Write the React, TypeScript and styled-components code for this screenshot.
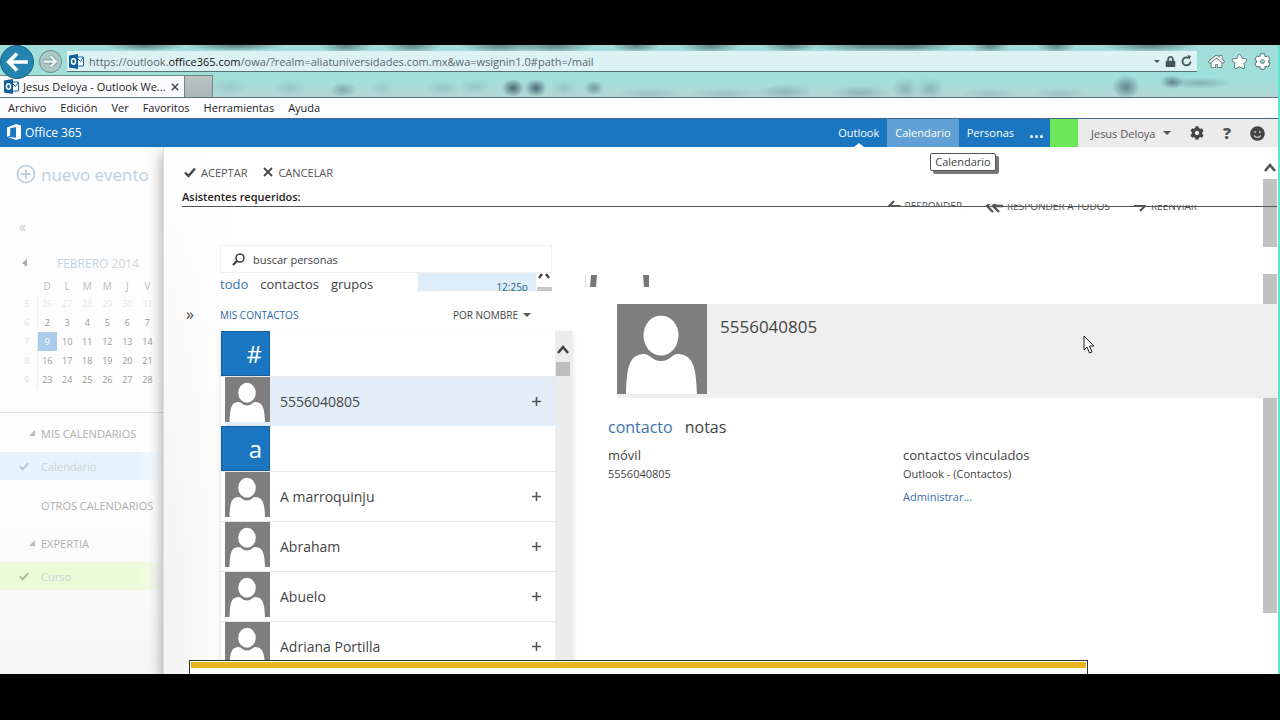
import React from "react";
import styled, { createGlobalStyle } from "styled-components";
import { FaLock, FaCog, FaHome, FaStar, FaSmile } from "react-icons/fa";

const GlobalStyle = createGlobalStyle`
  *, *::before, *::after { box-sizing: border-box; }
  body { margin: 0; background: #000; font-family: "Open Sans", "Noto Sans", sans-serif; font-size: 11px; color: #444; }
  button, input { font: inherit; color: inherit; }
  button { border: 0; padding: 0; background: none; cursor: pointer; }
  a { text-decoration: none; color: inherit; }
  svg { display: block; flex: none; }
  ul { list-style: none; margin: 0; padding: 0; }
  p, h1, h2, h3 { margin: 0; font-weight: 400; }
`;

const Screen = styled.div`
  height: 100vh;
  padding: 45px 0 46px;
  background: #000;
  display: flex;
`;

const Browser = styled.div`
  flex: 1;
  min-width: 0;
  display: flex;
  flex-direction: column;
  overflow: hidden;
  background: #fff;
  border-right: 2px solid #5fe6d0;
`;

/* ---------- window frame ---------- */

const spot = (x: number, y: number, w: number, h: number, color: string) =>
  `radial-gradient(ellipse ${w}px ${h}px at ${x}px ${y}px, ${color}, transparent)`;

const glassSpots = [
  [346, 1, 26, 7], [412, 1, 28, 7], [500, 1, 40, 7], [555, 1, 40, 7], [636, 1, 24, 6],
  [710, 1, 30, 7], [790, 1, 28, 6], [870, 1, 60, 6], [915, 1, 40, 6], [990, 1, 20, 7],
  [1056, 1, 20, 7], [1150, 1, 48, 6], [145, 1, 40, 5], [235, 1, 50, 5],
].map(([x, y, w, h]) => spot(x, y, w, h, "rgba(60,85,88,.65)")).join(",");

const tabSpots = [
  [343, 45, 14, 8, 0.35], [382, 43, 12, 8, 0.12], [443, 43, 16, 8, 0.15], [475, 42, 16, 8, 0.15],
  [513, 43, 11, 9, 0.8], [536, 43, 11, 9, 0.8], [564, 43, 14, 9, 0.15], [594, 43, 10, 8, 0.45],
  [650, 49, 36, 6, 0.15], [725, 49, 40, 6, 0.15], [785, 47, 28, 8, 0.25], [860, 48, 30, 8, 0.25],
  [905, 44, 14, 12, 0.25], [930, 44, 14, 12, 0.25], [990, 49, 30, 6, 0.15], [1060, 49, 30, 6, 0.15],
  [1126, 42, 14, 12, 0.6], [1172, 37, 12, 7, 0.6], [1200, 38, 32, 6, 0.3], [230, 42, 20, 9, 0.12], [290, 43, 18, 9, 0.15],
].map(([x, y, w, h, a]) => spot(x, y, w, h, `rgba(50,75,90,${a})`)).join(",");

const Frame = styled.div`
  flex: none;
  background: ${glassSpots}, ${tabSpots}, linear-gradient(#a2dcd9, #a0e0da 60%, #b2d8d6);
  border-bottom: 1px solid #5d7573;
`;

const AddressRow = styled.div`
  height: 30px;
  display: flex;
  align-items: center;
  gap: 5px;
`;

const BackButton = styled.button`
  position: relative;
  width: 34px;
  height: 34px;
  margin: 3px 0 -1px;
  border-radius: 50%;
  border: 1px solid #1c6484;
  background: #2384b0;
  display: grid;
  place-items: center;
`;

const ForwardButton = styled.button`
  width: 23px;
  height: 23px;
  margin-top: 2px;
  border-radius: 50%;
  border: 1px solid #6d8989;
  background: #adc8c6;
  display: grid;
  place-items: center;
  svg { paint-order: stroke; filter: drop-shadow(0 0 1px #4f6b6b); }
`;

const AddressBox = styled.label`
  flex: 1;
  min-width: 0;
  height: 21px;
  margin-top: 3px;
  padding: 0 5px 0 2px;
  display: flex;
  align-items: center;
  gap: 5px;
  background: #dcf2f4;
  border-bottom: 1px solid #567271;
`;

const UrlField = styled.div`
  flex: 1;
  min-width: 0;
  line-height: 19px;
  white-space: nowrap;
  color: #58686b;
  b { font-weight: 400; color: #111; }
`;

const ChromeIcons = styled.div`
  display: flex;
  gap: 8px;
  padding: 2px 8px 0 7px;
  color: #fff;
  button svg { stroke: #52706f; stroke-width: 60px; paint-order: stroke; overflow: visible; }
`;

const TabRow = styled.div`
  height: 22px;
  display: flex;
`;

const Tab = styled.div`
  width: 185px;
  padding: 0 5px 0 4px;
  border: 1px solid #6f8886;
  border-width: 1px 1px 0 0;
  background: #fcfcfe;
  display: flex;
  align-items: center;
  gap: 4px;
  color: #222;
  white-space: nowrap;
  span { flex: 1; }
`;

const NewTab = styled.button`
  width: 28px;
  border: 1px solid #6f8886;
  border-left: 0;
  border-bottom: 0;
  background: linear-gradient(#bcc3c3, #a9b5b4);
`;

const MenuBar = styled.nav`
  flex: none;
  height: 21px;
  padding: 0 8px 1px;
  display: flex;
  align-items: center;
  gap: 14px;
  background: #fdfcfe;
  border-bottom: 1px solid #45688a;
  color: #222;
`;

/* ---------- Office bar ---------- */

const OfficeBar = styled.header`
  flex: none;
  height: 28px;
  display: flex;
  background: #1b76c1;
  color: #fff;
`;

const Brand = styled.a`
  flex: 1;
  padding: 0 0 2px 7px;
  display: flex;
  align-items: center;
  gap: 4px;
  font-size: 12px;
`;

const NavLink = styled.a<{ $hover?: boolean; $current?: boolean }>`
  position: relative;
  padding: 0 8px;
  line-height: 28px;
  font-size: 11px;
  font-weight: 500;
  background: ${(p) => (p.$hover ? "#61a0d4" : "none")};
  &::after {
    content: "";
    display: ${(p) => (p.$current ? "block" : "none")};
    position: absolute;
    bottom: 0;
    left: 50%;
    margin-left: -5px;
    border: 5px solid transparent;
    border-top: 0;
    border-bottom: 4px solid #fff;
  }
`;

const Tooltip = styled.span`
  position: absolute;
  z-index: 5;
  top: 34px;
  left: 43px;
  padding: 0 4px;
  line-height: 16px;
  border: 1px solid #555;
  border-radius: 2px;
  background: #fff;
  color: #444;
  font-weight: 400;
  box-shadow: 3px 3px 0 #777;
`;

const MoreButton = styled.button`
  width: 28px;
  display: flex;
  align-items: center;
  justify-content: center;
  gap: 2px;
  padding-top: 6px;
  i { width: 3px; height: 3px; border-radius: 50%; background: #fff; }
`;

const Presence = styled.div`
  width: 28px;
  background: #6de65b;
`;

const UserArea = styled.div`
  width: 200px;
  padding: 0 13px;
  display: flex;
  align-items: center;
  justify-content: space-between;
  background: #ebebeb;
  color: #555;
`;

const UserButton = styled.button`
  display: flex;
  align-items: center;
  gap: 8px;
`;

const HelpButton = styled.button`
  font-size: 16px;
  font-weight: 800;
`;

/* ---------- calendar side column ---------- */

const Workspace = styled.div`
  flex: 1;
  min-height: 0;
  display: flex;
  overflow: hidden;
`;

const Side = styled.aside`
  width: 163px;
  flex: none;
  background: linear-gradient(#fdfdfd 70%, #f6f6f6);
  color: #bbb;
`;

const NewEvent = styled.button`
  display: flex;
  align-items: center;
  gap: 5px;
  height: 26px;
  margin: 14px 0 0 16px;
  font-size: 17px;
  color: #bccfdd;
`;

const Collapse = styled.button`
  display: block;
  margin: 28px 0 0 19px;
  height: 22px;
  font-size: 14px;
  color: #ccc;
`;

const MonthRow = styled.div`
  display: flex;
  align-items: center;
  height: 20px;
  margin-top: 16px;
  padding-left: 22px;
  gap: 30px;
  font-size: 12px;
  color: #c0d3e0;
  span { color: #cfd6da; }
`;

const MonthGrid = styled.table`
  margin: 5px 0 0 17px;
  border-collapse: collapse;
  table-layout: fixed;
  width: 141px;
  font-size: 9px;
  text-align: center;
  th, td { padding: 0; font-weight: 400; height: 19px; }
  thead th { height: 16px; font-size: 10px; }
`;

const Day = styled.td<{ $dim?: boolean; $selected?: boolean }>`
  color: ${(p) => (p.$selected ? "#fff" : p.$dim ? "#e6e6e6" : "#999")};
  background: ${(p) => (p.$selected ? "#aaccea" : "none")};
`;

const Week = styled.th`
  color: #e2e2e2;
  border-right: 1px solid #f0f0f0;
`;

const Groups = styled.div`
  margin-top: 23px;
  border-top: 1px solid #ddd;
  padding-top: 7px;
`;

const GroupTitle = styled.h3`
  display: flex;
  align-items: center;
  height: 28px;
  padding: 0 0 2px 29px;
  gap: 5px;
  font-size: 11px;
  color: #b0b0b0;
  white-space: nowrap;
  svg { fill: #bbb; }
`;

const CalendarItem = styled.div<{ $tone: string }>`
  height: 28px;
  margin: 4px 0 12px;
  padding-left: 19px;
  display: flex;
  align-items: center;
  gap: 12px;
  background: linear-gradient(90deg, ${(p) => p.$tone} 85%, transparent);
  color: #ccd2d6;
`;

const GroupGap = styled.div`
  height: 10px;
`;

/* ---------- people picker ---------- */

const Dialog = styled.main`
  position: relative;
  flex: 1;
  min-width: 0;
  display: flex;
  background: linear-gradient(#fefefe, rgba(254, 254, 254, 0) 80%), linear-gradient(90deg, #f3f3f3, #fefefe 64px);
  border-left: 1px solid #ddd;
  box-shadow: -2px 6px 12px rgba(0, 0, 0, 0.3);
`;

const DialogBody = styled.div`
  flex: 1;
  min-width: 0;
  display: flex;
  flex-direction: column;
`;

const Commands = styled.div`
  display: flex;
  align-items: center;
  gap: 16px;
  height: 18px;
  margin: 16px 0 7px 20px;
`;

const Command = styled.button`
  display: flex;
  align-items: center;
  gap: 5px;
  color: #555;
`;

const FieldRow = styled.div`
  position: relative;
  height: 19px;
  margin-left: 18px;
  line-height: 18px;
  font-weight: 600;
  border-bottom: 1px solid #555;
  color: #222;
`;

/* remains of the message toolbar that shows behind the rule */
const BehindBar = styled.div`
  position: absolute;
  z-index: -1;
  top: 11px;
  right: 66px;
  height: 14px;
  display: flex;
  gap: 23px;
  font-weight: 400;
  font-size: 10px;
  line-height: 14px;
  color: #555;
`;

const BehindCommand = styled.span<{ $from: number; $size: number }>`
  position: relative;
  display: flex;
  align-items: center;
  gap: 4px;
  &::after {
    content: "";
    position: absolute;
    top: ${(p) => p.$from}px;
    height: ${(p) => p.$size}px;
    left: 0;
    right: 0;
    background: #fefefe;
  }
`;

const FieldLayer = styled.div`
  position: relative;
  z-index: 0;
`;

const Columns = styled.div`
  flex: 1;
  min-height: 0;
  display: flex;
`;

const Expander = styled.button`
  width: 56px;
  height: 22px;
  flex: none;
  margin-top: 96px;
  padding-left: 22px;
  text-align: left;
  font-size: 16px;
  line-height: 16px;
`;

const Picker = styled.section`
  width: 352px;
  flex: none;
  padding-top: 38px;
  display: flex;
  flex-direction: column;
`;

const SearchBox = styled.label`
  width: 332px;
  height: 28px;
  padding-left: 11px;
  display: flex;
  align-items: center;
  gap: 8px;
  border: 1px solid #f0f0f0;
  background: #fff;
  input {
    flex: 1; border: 0; outline: 0; padding: 0; background: none; color: #444;
    &::placeholder { color: #444; opacity: 1; }
  }
`;

const Filters = styled.div`
  display: flex;
  gap: 12px;
  height: 24px;
  width: 332px;
  font-size: 13px;
`;

const Filter = styled.button<{ $active?: boolean }>`
  padding-bottom: 2px;
  color: ${(p) => (p.$active ? "#3a75ae" : "#444")};
`;

const MessagePeek = styled.div`
  margin-left: auto;
  width: 134px;
  height: 18px;
  overflow: hidden;
  display: flex;
  font-size: 10px;
  line-height: 14px;
  color: #2b6488;
`;

const PeekTime = styled.span`
  flex: 1;
  padding: 7px 8px 0 0;
  text-align: right;
  background: #deecf8;
`;

const PeekScroll = styled.span`
  width: 16px;
  padding-left: 1px;
  display: flex;
  flex-direction: column;
  justify-content: space-between;
  color: #555;
  &::after { content: ""; height: 4px; background: #c8c8c8; }
`;

const ListHead = styled.div`
  display: flex;
  align-items: center;
  justify-content: space-between;
  width: 311px;
  height: 20px;
  margin: 8px 0 6px;
  font-size: 10px;
  h2 { font-size: 10px; color: #2f67a5; }
`;

const SortButton = styled.button`
  display: flex;
  align-items: center;
  gap: 5px;
`;

const ListFrame = styled.div`
  flex: 1;
  min-height: 0;
  display: flex;
  margin-left: 1px;
  background: #fff;
  box-shadow: 0 3px 5px rgba(0, 0, 0, 0.14);
  overflow: hidden;
`;

const ContactList = styled.ul`
  flex: 1;
  height: 0;
`;

const LetterRow = styled.li`
  height: 45px;
`;

const LetterTile = styled.div`
  width: 49px;
  height: 45px;
  padding: 0 7px;
  background: #1b76c1;
  border: 1px solid #155f9c;
  color: #fff;
  font-size: 24px;
  line-height: 44px;
  text-align: right;
`;

const ContactRow = styled.li<{ $selected?: boolean }>`
  height: 50px;
  padding: 0 13px 0 4px;
  display: flex;
  align-items: center;
  gap: 10px;
  border-top: 1px solid #e8e8e8;
  background: ${(p) => (p.$selected ? "linear-gradient(90deg, #fff 4px, #e3edf8 4px)" : "#fff")};
  font-size: 14px;
  > svg { align-self: flex-start; }
  span { flex: 1; }
`;

const ListScroll = styled.div`
  width: 17px;
  padding: 13px 2px 0 1px;
  background: #ececec;
  color: #444;
  &::after { content: ""; display: block; height: 14px; margin-top: 7px; background: #bdbdbd; }
`;

/* ---------- contact card ---------- */

const Card = styled.section`
  flex: 1;
  min-width: 0;
  padding: 68px 0 0 12px;
`;

const AvatarPeek = styled.div`
  height: 12px;
  margin-bottom: 17px;
`;

const Banner = styled.div`
  height: 94px;
  margin-left: 24px;
  padding-left: 9px;
  display: flex;
  gap: 13px;
  background: linear-gradient(90deg, #fefefe 9px, #efefef 9px);
  h1 { padding-top: 10px; font-size: 17px; line-height: 26px; }
`;

const CardTabs = styled.div`
  display: flex;
  gap: 12px;
  height: 26px;
  margin: 17px 0 2px 24px;
  font-size: 16px;
`;

const Facts = styled.div`
  display: grid;
  grid-template-columns: 295px 1fr;
  margin-left: 24px;
  h3 { font-size: 13px; line-height: 24px; }
  p { line-height: 14px; }
  a { display: block; margin-top: 9px; line-height: 14px; color: #3a6ea8; }
`;

const PageScroll = styled.div`
  width: 15px;
  flex: none;
  padding: 15px 1px 0 0;
  color: #555;
`;

const ScrollPart = styled.div<{ $size: number; $tone: string }>`
  height: ${(p) => p.$size}px;
  background: ${(p) => p.$tone};
`;

const Notice = styled.div`
  position: absolute;
  z-index: 3;
  left: 25px;
  right: 190px;
  bottom: 0;
  height: 14px;
  padding: 1px;
  border: 1px solid #333;
  border-bottom: 0;
  background: #fff;
  &::before { content: ""; display: block; height: 6px; background: #e8b420; }
`;

const Pointer = styled.svg`
  position: absolute;
  left: 919px;
  top: 188px;
`;

/* ---------- drawings ---------- */

const OutlookLogo = () => (
  <svg width="15" height="15" viewBox="0 0 15 15" aria-hidden="true">
    <path d="M8 3h6.5v9H8z" fill="#fff" stroke="#1668a8" />
    <path d="M8 4l3.5 3.5L14.5 3" fill="none" stroke="#1668a8" />
    <path d="M0 1.5L9 0v15L0 13.5z" fill="#0f5f9e" />
    <ellipse cx="4.5" cy="7.5" rx="2" ry="2.7" fill="none" stroke="#fff" strokeWidth="1.5" />
  </svg>
);

const OfficeLogo = () => (
  <svg width="14" height="16" viewBox="0 0 14 16" aria-hidden="true">
    <path d="M0 3.5L9 0l5 1.5v13L9 16 0 12.7l9 1V3L3.2 4.3v7.2L0 12.7z" fill="#fff" />
  </svg>
);

const Arrow = ({ size, flip, color }: { size: number; flip?: boolean; color: string }) => (
  <svg width={size} height={size} viewBox="0 0 20 20" fill="none" stroke={color} strokeWidth="3" aria-hidden="true">
    <path d={flip ? "M1 10h16M10 3l7 7-7 7" : "M19 10H3M10 3l-7 7 7 7"} />
  </svg>
);

const Check = ({ color = "#444", size = 12 }: { color?: string; size?: number }) => (
  <svg width={size} height={size} viewBox="0 0 12 12" fill="none" stroke={color} strokeWidth="2.4" aria-hidden="true">
    <path d="M1 6.5L4.5 10 11 2.5" />
  </svg>
);

const Cross = ({ size = 10, width = 1.8 }: { size?: number; width?: number }) => (
  <svg width={size} height={size} viewBox="0 0 10 10" fill="none" stroke="#444" strokeWidth={width} aria-hidden="true">
    <path d="M1 1l8 8M9 1L1 9" />
  </svg>
);

const Caret = () => (
  <svg width="8" height="4" viewBox="0 0 8 4" fill="#555" aria-hidden="true"><path d="M0 0h8L4 4z" /></svg>
);

const Chevron = () => (
  <svg width="14" height="11" viewBox="0 0 14 11" fill="none" stroke="currentColor" strokeWidth="2.6" aria-hidden="true">
    <path d="M2 9l5-6 5 6" />
  </svg>
);

const Plus = () => (
  <svg width="11" height="11" viewBox="0 0 11 11" stroke="#555" strokeWidth="1.6" aria-hidden="true">
    <path d="M5.5 1v9M1 5.5h9" />
  </svg>
);

const Corner = () => (
  <svg width="7" height="6" viewBox="0 0 7 6" aria-hidden="true"><path d="M6 0v6H0z" /></svg>
);

const Avatar = ({ size }: { size: number }) => (
  <svg width={size} height={size} viewBox="0 0 90 90" aria-hidden="true">
    <path d="M0 0h90v90H0z" fill="#7e7e7e" />
    <path d="M9 90C10 62 12 51 27 50c6 0 8 7 17 7s11-7 17-7c15 1 18 12 19 40z" fill="#fff" />
    <ellipse cx="44" cy="31.5" rx="17.5" ry="20" fill="#fff" />
  </svg>
);

const days = [
  ["5", "26", "27", "28", "29", "30", "31"],
  ["6", "2", "3", "4", "5", "6", "7"],
  ["7", "9", "10", "11", "12", "13", "14"],
  ["8", "16", "17", "18", "19", "20", "21"],
  ["9", "23", "24", "25", "26", "27", "28"],
];

const Contact = ({ name, selected }: { name: string; selected?: boolean }) => (
  <ContactRow $selected={selected}>
    <Avatar size={45} />
    <span>{name}</span>
    <button aria-label={`Agregar ${name}`}><Plus /></button>
  </ContactRow>
);

export default function App() {
  return (
    <Screen>
      <GlobalStyle />
      <Browser>
        <Frame>
          <AddressRow>
            <BackButton aria-label="Atrás"><Arrow size={24} color="#fff" /></BackButton>
            <ForwardButton aria-label="Adelante"><Arrow size={15} flip color="#eef6f6" /></ForwardButton>
            <AddressBox as="div">
              <OutlookLogo />
              <UrlField>
                https://outlook.<b>office365.com</b>/owa/?realm=aliatuniversidades.com.mx&amp;wa=wsignin1.0#path=/mail
              </UrlField>
              <svg width="6" height="3" viewBox="0 0 6 3" fill="#455"><path d="M0 0h6L3 3z" /></svg>
              <FaLock size={11} color="#455" />
              <svg width="11" height="12" viewBox="0 0 11 12" fill="none" stroke="#455" strokeWidth="1.8">
                <path d="M9.5 6.5A4 4 0 1 1 7.5 3" /><path d="M6.5 0l3.5 1-2 4z" fill="#455" stroke="none" />
              </svg>
            </AddressBox>
            <ChromeIcons>
              <button aria-label="Inicio"><FaHome size={15} /></button>
              <button aria-label="Favoritos"><FaStar size={15} /></button>
              <button aria-label="Opciones"><FaCog size={15} /></button>
            </ChromeIcons>
          </AddressRow>
          <TabRow>
            <Tab>
              <OutlookLogo />
              <span>Jesus Deloya - Outlook We...</span>
              <button aria-label="Cerrar"><Cross size={8} /></button>
            </Tab>
            <NewTab aria-label="Nueva pestaña" />
          </TabRow>
        </Frame>
        <MenuBar>
          {["Archivo", "Edición", "Ver", "Favoritos", "Herramientas", "Ayuda"].map((m) => (
            <button key={m}>{m}</button>
          ))}
        </MenuBar>

        <OfficeBar>
          <Brand href="#"><OfficeLogo />Office 365</Brand>
          <NavLink href="#" $current>Outlook</NavLink>
          <NavLink href="#" $hover>Calendario<Tooltip>Calendario</Tooltip></NavLink>
          <NavLink href="#">Personas</NavLink>
          <MoreButton aria-label="Más"><i /><i /><i /></MoreButton>
          <Presence />
          <UserArea>
            <UserButton>Jesus Deloya <Caret /></UserButton>
            <button aria-label="Configuración"><FaCog size={14} color="#444" /></button>
            <HelpButton>?</HelpButton>
            <button aria-label="Cuenta"><FaSmile size={15} color="#444" /></button>
          </UserArea>
        </OfficeBar>

        <Workspace>
          <Side>
            <NewEvent>
              <svg width="20" height="20" viewBox="0 0 20 20" fill="none" stroke="#bccfdd" strokeWidth="1.7">
                <circle cx="10" cy="10" r="8.5" /><path d="M10 5.5v9M5.5 10h9" strokeWidth="2" />
              </svg>
              nuevo evento
            </NewEvent>
            <Collapse>«</Collapse>
            <MonthRow>
              <svg width="5" height="8" viewBox="0 0 5 8" fill="#aaa"><path d="M5 0v8L0 4z" /></svg>
              <div>FEBRER<span>O 2014</span></div>
            </MonthRow>
            <MonthGrid>
              <thead>
                <tr><th />{["D", "L", "M", "M", "J", "V"].map((d, i) => <th key={i}>{d}</th>)}</tr>
              </thead>
              <tbody>
                {days.map(([week, ...row], r) => (
                  <tr key={week}>
                    <Week>{week}</Week>
                    {row.map((d) => <Day key={d} $dim={r === 0} $selected={r === 2 && d === "9"}>{d}</Day>)}
                  </tr>
                ))}
              </tbody>
            </MonthGrid>
            <Groups>
              <GroupTitle><Corner />MIS CALENDARIOS</GroupTitle>
              <CalendarItem $tone="#e6f3fc"><Check color="#bcc6cc" size={10} />Calendario</CalendarItem>
              <GroupTitle><svg width="7" height="6" />OTROS CALENDARIOS</GroupTitle>
              <GroupGap />
              <GroupTitle><Corner />EXPERTIA</GroupTitle>
              <CalendarItem $tone="#ebfbd8"><Check color="#a9b8a0" size={10} />Curso</CalendarItem>
            </Groups>
          </Side>

          <Dialog>
            <DialogBody>
              <Commands>
                <Command><Check />ACEPTAR</Command>
                <Command><Cross />CANCELAR</Command>
              </Commands>
              <FieldLayer>
                <FieldRow>
                  Asistentes requeridos:
                  <BehindBar>
                    <BehindCommand $from={8} $size={6}><Arrow size={14} color="#555" />RESPONDER</BehindCommand>
                    <BehindCommand $from={0} $size={5}>
                      <svg width="18" height="14" viewBox="0 0 18 14" fill="none" stroke="#555" strokeWidth="2.4">
                        <path d="M8 1L2 7l6 6M14 1L8 7l6 6M8 7h10" />
                      </svg>
                      RESPONDER A TODOS
                    </BehindCommand>
                    <BehindCommand $from={0} $size={6}><Arrow size={14} flip color="#555" />REENVIAR</BehindCommand>
                  </BehindBar>
                </FieldRow>
              </FieldLayer>
              <Columns>
                <Expander aria-label="Expandir">»</Expander>
                <Picker>
                  <SearchBox>
                    <svg width="13" height="13" viewBox="0 0 13 13" fill="none" stroke="#444">
                      <circle cx="8" cy="5" r="4" strokeWidth="1.6" /><path d="M5 8l-4 4" strokeWidth="2.4" />
                    </svg>
                    <input type="text" placeholder="buscar personas" aria-label="buscar personas" />
                  </SearchBox>
                  <Filters>
                    <Filter $active>todo</Filter>
                    <Filter>contactos</Filter>
                    <Filter>grupos</Filter>
                    <MessagePeek>
                      <PeekTime>12:25p</PeekTime>
                      <PeekScroll>
                        <svg width="14" height="6" viewBox="0 0 14 6" fill="none" stroke="#444" strokeWidth="2.4"><path d="M2 5l3-4M9 1l3 4" /></svg>
                      </PeekScroll>
                    </MessagePeek>
                  </Filters>
                  <ListHead>
                    <h2>MIS CONTACTOS</h2>
                    <SortButton>POR NOMBRE <Caret /></SortButton>
                  </ListHead>
                  <ListFrame>
                    <ContactList>
                      <LetterRow><LetterTile>#</LetterTile></LetterRow>
                      <Contact name="5556040805" selected />
                      <LetterRow><LetterTile>a</LetterTile></LetterRow>
                      <Contact name="A marroquinju" />
                      <Contact name="Abraham" />
                      <Contact name="Abuelo" />
                      <Contact name="Adriana Portilla" />
                    </ContactList>
                    <ListScroll><Chevron /></ListScroll>
                  </ListFrame>
                </Picker>
                <Card>
                  <AvatarPeek>
                    <svg width="68" height="12" viewBox="0 0 68 12">
                      <path d="M1.5 0v12H5" fill="none" stroke="#ddd" />
                      <path d="M7 0h6l-1 12H6zM59 0h6v12h-5z" fill="#777" />
                    </svg>
                  </AvatarPeek>
                  <Banner><Avatar size={90} /><h1>5556040805</h1></Banner>
                  <CardTabs>
                    <Filter $active>contacto</Filter>
                    <Filter>notas</Filter>
                  </CardTabs>
                  <Facts>
                    <div><h3>móvil</h3><p>5556040805</p></div>
                    <div>
                      <h3>contactos vinculados</h3>
                      <p>Outlook - (Contactos)</p>
                      <a href="#">Administrar...</a>
                    </div>
                  </Facts>
                </Card>
              </Columns>
            </DialogBody>
            <PageScroll>
              <Chevron />
              <ScrollPart $size={6} $tone="transparent" />
              <ScrollPart $size={27} $tone="#c1c1c1" />
              <ScrollPart $size={1} $tone="#555" />
              <ScrollPart $size={40} $tone="#c1c1c1" />
              <ScrollPart $size={27} $tone="transparent" />
              <ScrollPart $size={30} $tone="#c1c1c1" />
              <ScrollPart $size={94} $tone="#efefef" />
              <ScrollPart $size={215} $tone="#c1c1c1" />
            </PageScroll>
            <Notice />
            <Pointer width="12" height="19" viewBox="0 0 12 19" fill="#fff" stroke="#222">
              <path d="M1 1v14l3-3 2.5 6 2.5-1-2.5-6H11z" />
            </Pointer>
          </Dialog>
        </Workspace>
      </Browser>
    </Screen>
  );
}
